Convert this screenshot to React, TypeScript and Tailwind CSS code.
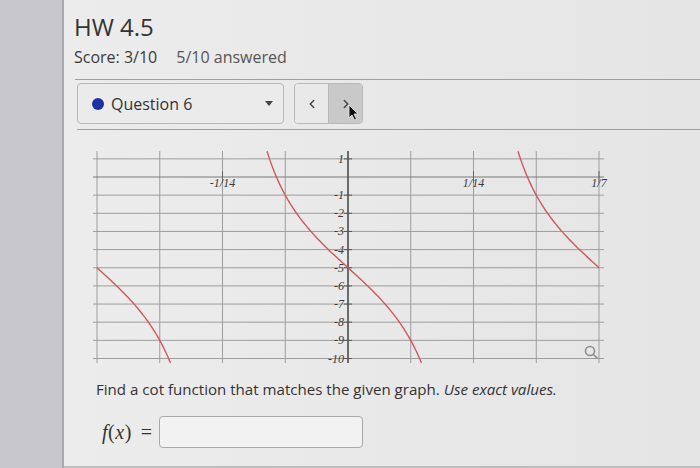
import React from 'react';
import { ChevronLeft, ChevronRight } from 'lucide-react';

const X0 = 348;
const CELL = 62.75;
const YUNIT = 18.15;
const yOf = (v: number) => 178 - YUNIT * v;

const xLines = [-4, -3, -2, -1, 0, 1, 2, 3, 4].map((k) => X0 + CELL * k);
const yValues = [1, 0, -1, -2, -3, -4, -5, -6, -7, -8, -9, -10];

// tan shaped branch around center c, clipped to [from, to]
const branch = (c: number, from: number, to: number) => {
  const pts: string[] = [];
  const steps = 60;
  for (let i = 0; i <= steps; i++) {
    const x = from + ((to - from) * i) / steps;
    const y = yOf(-5) + 4 * YUNIT * Math.tan((Math.PI * (x - c)) / (4 * CELL));
    pts.push(`${i === 0 ? 'M' : 'L'}${x.toFixed(2)} ${y.toFixed(2)}`);
  }
  return pts.join(' ');
};

const Graph = () => (
  <svg width={530} height={225} viewBox="80 145 530 225" className="block">
    {xLines.map((x) => (
      <line key={'v' + x} x1={x} y1={152} x2={x} y2={364} stroke="#9d9d9d" strokeWidth={1} />
    ))}
    {yValues.map((v) => (
      <line
        key={'h' + v}
        x1={93}
        y1={yOf(v)}
        x2={604}
        y2={yOf(v)}
        stroke={v === 0 ? '#7a7a7a' : '#9d9d9d'}
        strokeWidth={1}
      />
    ))}
    <line x1={X0} y1={152} x2={X0} y2={364} stroke="#555" strokeWidth={1.6} />
    {yValues
      .filter((v) => v !== 0)
      .map((v) => (
        <g key={'t' + v}>
          <line x1={X0 - 4} y1={yOf(v)} x2={X0 + 4} y2={yOf(v)} stroke="#555" strokeWidth={1} />
          <text
            x={X0 - 4}
            y={yOf(v) + 4}
            textAnchor="end"
            fontFamily="'Liberation Serif', serif"
            fontStyle="italic"
            fontSize={12}
            fill="#3a3a3a"
          >
            {v === 1 ? '1' : `-${Math.abs(v)}`}
          </text>
        </g>
      ))}
    {[
      { x: X0 - 2 * CELL, t: '-1/14' },
      { x: X0 + 2 * CELL, t: '1/14' },
      { x: X0 + 4 * CELL, t: '1/7' },
    ].map((l) => (
      <g key={l.t}>
        <line x1={l.x} y1={172} x2={l.x} y2={184} stroke="#666" strokeWidth={1} />
        <text
          x={l.x}
          y={yOf(-0.5) + 1}
          textAnchor="middle"
          fontFamily="'Liberation Serif', serif"
          fontStyle="italic"
          fontSize={12}
          fill="#3a3a3a"
        >
          {l.t}
        </text>
      </g>
    ))}
    <g fill="none" stroke="#d05858" strokeWidth={1.4}>
      <path d={branch(X0 - 4 * CELL, X0 - 4 * CELL, 170.5)} />
      <path d={branch(X0, 267, 421.5)} />
      <path d={branch(X0 + 4 * CELL, 518, X0 + 4 * CELL)} />
    </g>
    <g fill="none" stroke="#8e8e8e" strokeWidth={1.6}>
      <circle cx={590} cy={352} r={4.5} />
      <line x1={593.5} y1={355.5} x2={597.5} y2={359.5} />
    </g>
  </svg>
);

const App = () => {
  return (
    <div
      className="flex h-[468px] w-[700px] overflow-hidden bg-[#e9e9e9] text-[#333]"
      style={{ fontFamily: "'Open Sans', 'Noto Sans', sans-serif" }}
    >
      <div className="w-[64px] shrink-0 border-r-2 border-[#a9a9ae] bg-[#c7c7cc]" />

      <div className="flex flex-1 flex-col border-b-2 border-[#bdbdbd] bg-gradient-to-r from-[#ececec] to-[#e5e5e5]">
        <h1 className="ml-[10px] mt-[15px] text-[24px] font-normal leading-[24px] text-[#333]">HW 4.5</h1>

        <div className="ml-[10px] mt-[8px] flex gap-[19px] text-[16px] leading-[20px]">
          <span className="text-[#3a3a3a]">Score: 3/10</span>
          <span className="text-[#555]">5/10 answered</span>
        </div>

        <div className="ml-[11px] mt-[12px] h-px bg-[#9f9f9f]" />

        <div className="ml-[13px] mt-[3px] flex gap-[10px]">
          <div className="flex h-[41px] w-[207px] items-center rounded-[4px] border border-[#b8b8b8] bg-[#ebebeb] pl-[14px] pr-[8px]">
            <span className="h-[12px] w-[12px] rounded-full bg-[#1f2fa6]" />
            <span className="ml-[7px] text-[16px] text-[#333]">Question 6</span>
            <span className="ml-auto mr-[2px] h-0 w-0 border-x-[4px] border-t-[5px] border-x-transparent border-t-[#444]" />
          </div>

          <div className="relative flex h-[41px] w-[69px] overflow-hidden rounded-[4px] border border-[#b8b8b8]">
            <div className="flex w-[34px] items-center justify-center border-r border-[#b8b8b8] bg-[#e9e9e9]">
              <ChevronLeft size={14} strokeWidth={2.5} color="#444" />
            </div>
            <div className="flex flex-1 items-center justify-center bg-[#c9c9c9]">
              <ChevronRight size={14} strokeWidth={2.5} color="#444" />
            </div>
            <svg className="absolute left-[53px] top-[20px]" width={11} height={17} viewBox="0 0 11 17">
              <path d="M1 1 L1 14 L4 11 L6.5 16 L8.5 15 L6 10 L10 10 Z" fill="#111" stroke="#eee" strokeWidth={0.8} />
            </svg>
          </div>
        </div>

        <div className="ml-[13px] mt-[5px] h-px bg-[#9f9f9f]" />

        <div className="ml-[16px] mt-[14px]">
          <Graph />
        </div>

        <p className="ml-[32px] mt-[10px] text-[15.1px] leading-[20px] text-[#333]">
          Find a cot function that matches the given graph. <em>Use exact values.</em>
        </p>

        <div className="ml-[38px] mt-[17px] flex items-center">
          <span
            className="w-[57px] text-[20px] tracking-[0.5px] text-[#333]"
            style={{ fontFamily: "'Liberation Serif', 'DejaVu Serif', serif" }}
          >
            <i>f</i>(<i>x</i>)<span className="ml-[9px]">=</span>
          </span>
          <div className="h-[32px] w-[204px] rounded-[4px] border border-[#a9a9a9] bg-[#f2f2f2]" />
        </div>
      </div>
    </div>
  );
};

export default App;
